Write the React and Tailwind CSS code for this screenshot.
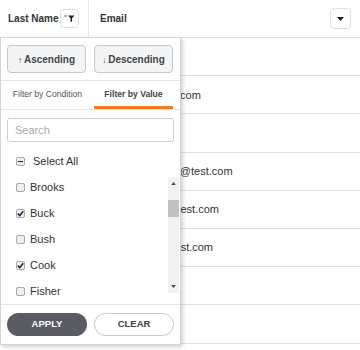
import React from 'react';

const rows = [
  '',
  'eli.brooks@test.com',
  '',
  'mackenzie.buck@test.com',
  'anthony.bush@test.com',
  'william.cook@test.com',
  '',
  '',
];

const values = [
  { name: 'Brooks', checked: false },
  { name: 'Buck', checked: true },
  { name: 'Bush', checked: false },
  { name: 'Cook', checked: true },
  { name: 'Fisher', checked: false },
];

function Check({ checked, minus }) {
  return (
    <span className="w-[9px] h-[9px] rounded-[2px] border border-[#a9a9a9] bg-[#eeeeee] flex items-center justify-center shrink-0">
      {checked && (
        <svg width="7" height="7" viewBox="0 0 10 10">
          <path d="M1.2 5.2 L4 8 L8.8 1.8" fill="none" stroke="#222" strokeWidth="2.2" />
        </svg>
      )}
      {minus && <span className="w-[5px] h-[1.5px] bg-[#222]" />}
    </span>
  );
}

export default function App() {
  return (
    <div className="relative w-[360px] h-[350px] bg-white overflow-hidden text-[#333]" style={{ fontFamily: '"Liberation Sans", Arial, sans-serif' }}>
      <div className="flex h-[38px] border-b border-[#e2e2e2]">
        <div className="w-[89px] border-r border-[#e6e6e6] flex items-center pl-[8px] gap-[1px]">
          <span className="text-[10px] font-bold">Last Name</span>
          <span className="w-[19px] h-[19px] border border-[#e0e0e0] rounded-[4px] flex items-center justify-center">
            <svg width="11" height="7" viewBox="0 0 11 7">
              <path d="M0.5 1 L2.5 1" stroke="#333" strokeWidth="1" />
              <path d="M4 0.5 L10.5 0.5 L8 3.3 L8 6.8 L6.5 6.8 L6.5 3.3 Z" fill="#222" />
            </svg>
          </span>
        </div>
        <div className="flex-1 flex items-center pl-[11px] pr-[9px] justify-between">
          <span className="text-[10px] font-bold">Email</span>
          <span className="w-[21px] h-[21px] border border-[#e0e0e0] rounded-[4px] flex items-center justify-center">
            <svg width="7" height="4" viewBox="0 0 7 4">
              <path d="M0 0 L7 0 L3.5 4 Z" fill="#222" />
            </svg>
          </span>
        </div>
      </div>

      {rows.map((email, i) => (
        <div key={i} className="flex h-[38.2px] border-b border-[#e2e2e2]">
          <div className="w-[89px]" />
          <div className="flex-1 flex items-center pl-[12px] text-[11px]">{email}</div>
        </div>
      ))}

      <div className="absolute left-0 top-[37px] w-[181px] bg-white border border-[#d4d4d4] shadow-[2px_2px_4px_rgba(0,0,0,0.18)] flex flex-col pb-[8px]">
        <div className="flex gap-[8px] px-[6px] pt-[7px] pb-[7px] border-b border-[#e4e4e4]">
          <button className="w-[79px] h-[28px] rounded-[4px] border border-[#c8c8c8] bg-[#f3f4f6] text-[10px] font-bold text-[#444]">
            <span className="font-normal text-[8px] mr-[2px]">↑</span>Ascending
          </button>
          <button className="w-[79px] h-[28px] rounded-[4px] border border-[#c8c8c8] bg-[#f3f4f6] text-[10px] font-bold text-[#444]">
            <span className="font-normal text-[8px] mr-[2px]">↓</span>Descending
          </button>
        </div>
        <div className="flex h-[29px] border-b border-[#e4e4e4]">
          <div className="w-[93px] h-[28px] flex items-center justify-center pt-[1px] border-b-[3px] border-transparent text-[8.6px] text-[#555]">Filter by Condition</div>
          <div className="w-[79px] h-[28px] flex items-center justify-center pt-[1px] border-b-[3px] border-[#f47b20] text-[8.6px] font-bold text-[#444]">Filter by Value</div>
        </div>
        <div className="px-[6px] pt-[8px]">
          <div className="h-[24px] border border-[#cfcfcf] rounded-[3px] flex items-center pl-[7px] text-[11px] text-[#aaa]">Search</div>
        </div>
        <div className="flex items-center gap-[8px] pl-[15px] h-[25px] mt-[7px] text-[11px]">
          <Check minus />
          <span>Select All</span>
        </div>
        <div className="flex h-[122px] overflow-hidden">
          <div className="flex-1 flex flex-col pl-[15px]">
            {values.map((v) => (
              <div key={v.name} className="flex items-center gap-[5px] h-[26.1px] shrink-0 text-[11px]">
                <Check checked={v.checked} />
                <span>{v.name}</span>
              </div>
            ))}
          </div>
          <div className="w-[11px] mr-[1px] my-[3px] bg-[#f1f1f1] flex flex-col items-center">
            <svg className="mt-[5px]" width="5" height="3" viewBox="0 0 6 4"><path d="M0 4 L6 4 L3 0 Z" fill="#444" /></svg>
            <div className="w-[11px] h-[17px] bg-[#c1c1c1] mt-[15px]" />
            <div className="flex-1" />
            <svg className="mb-[5px]" width="5" height="3" viewBox="0 0 6 4"><path d="M0 0 L6 0 L3 4 Z" fill="#444" /></svg>
          </div>
        </div>
        <div className="mt-[8px] border-t border-[#e4e4e4] flex gap-[7px] px-[6px] pt-[8px]">
          <button className="w-[80px] h-[23px] rounded-full bg-[#5b5b63] text-white text-[9.5px] font-bold">APPLY</button>
          <button className="w-[80px] h-[23px] rounded-full border border-[#c8c8c8] bg-white text-[9.5px] font-bold text-[#444]">CLEAR</button>
        </div>
      </div>
    </div>
  );
}
